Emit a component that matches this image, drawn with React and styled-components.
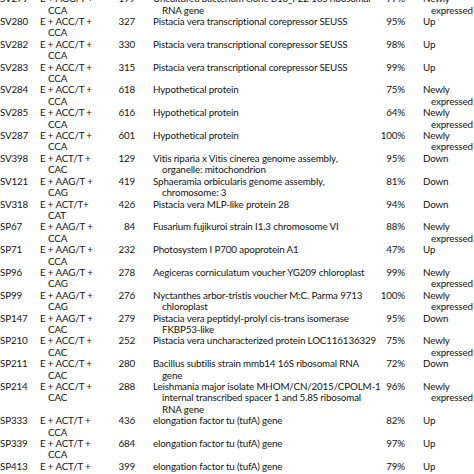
import React from 'react'
import styled, { createGlobalStyle } from 'styled-components'

const GlobalStyle = createGlobalStyle`
  html, body {
    margin: 0;
    padding: 0;
    background: #ffffff;
  }
  body {
    font-family: Lato, "Liberation Sans", Arial, sans-serif;
    color: #151515;
    overflow: hidden;
  }
`

const rows = [
  { id: 'SV279', primer: ['E + AGG/T +', 'CCA'], len: '199', desc: ['Uncultured bacterium clone B18_F22 16S ribosomal', 'RNA gene'], pct: '77%', reg: ['Newly', 'expressed'] },
  { id: 'SV280', primer: ['E + ACC/T +', 'CCA'], len: '327', desc: ['Pistacia vera transcriptional corepressor SEUSS'], pct: '95%', reg: ['Up'] },
  { id: 'SV282', primer: ['E + ACC/T +', 'CCA'], len: '330', desc: ['Pistacia vera transcriptional corepressor SEUSS'], pct: '98%', reg: ['Up'] },
  { id: 'SV283', primer: ['E + ACC/T +', 'CCA'], len: '315', desc: ['Pistacia vera transcriptional corepressor SEUSS'], pct: '99%', reg: ['Up'] },
  { id: 'SV284', primer: ['E + ACC/T +', 'CCA'], len: '618', desc: ['Hypothetical protein'], pct: '75%', reg: ['Newly', 'expressed'] },
  { id: 'SV285', primer: ['E + ACC/T +', 'CCA'], len: '616', desc: ['Hypothetical protein'], pct: '64%', reg: ['Newly', 'expressed'] },
  { id: 'SV287', primer: ['E + ACC/T +', 'CCA'], len: '601', desc: ['Hypothetical protein'], pct: '100%', reg: ['Newly', 'expressed'] },
  { id: 'SV398', primer: ['E + ACT/T +', 'CAC'], len: '129', desc: ['Vitis riparia x Vitis cinerea genome assembly,', 'organelle: mitochondrion'], pct: '95%', reg: ['Down'] },
  { id: 'SV121', primer: ['E + AAG/T +', 'CAG'], len: '419', desc: ['Sphaeramia orbicularis genome assembly,', 'chromosome: 3'], pct: '81%', reg: ['Down'] },
  { id: 'SV318', primer: ['E + ACT/T+', 'CAT'], len: '426', desc: ['Pistacia vera MLP-like protein 28'], pct: '94%', reg: ['Down'] },
  { id: 'SP67', primer: ['E + AAG/T +', 'CCA'], len: '84', desc: ['Fusarium fujikuroi strain I1.3 chromosome VI'], pct: '88%', reg: ['Newly', 'expressed'] },
  { id: 'SP71', primer: ['E + AAG/T +', 'CCA'], len: '232', desc: ['Photosystem I P700 apoprotein A1'], pct: '47%', reg: ['Up'] },
  { id: 'SP96', primer: ['E + AAG/T +', 'CAG'], len: '278', desc: ['Aegiceras corniculatum voucher YG209 chloroplast'], pct: '99%', reg: ['Newly', 'expressed'] },
  { id: 'SP99', primer: ['E + AAG/T +', 'CAG'], len: '276', desc: ['Nyctanthes arbor-tristis voucher M:C. Parma 9713', 'chloroplast'], pct: '100%', reg: ['Newly', 'expressed'] },
  { id: 'SP147', primer: ['E + AAG/T +', 'CAC'], len: '279', desc: ['Pistacia vera peptidyl-prolyl cis-trans isomerase', 'FKBP53-like'], pct: '95%', reg: ['Down'] },
  { id: 'SP210', primer: ['E + ACC/T +', 'CAC'], len: '252', desc: ['Pistacia vera uncharacterized protein LOC116136329'], pct: '75%', reg: ['Newly', 'expressed'] },
  { id: 'SP211', primer: ['E + ACC/T +', 'CAC'], len: '280', desc: ['Bacillus subtilis strain mmb14 16S ribosomal RNA', 'gene'], pct: '72%', reg: ['Down'] },
  { id: 'SP214', primer: ['E + ACC/T +', 'CAC'], len: '288', desc: ['Leishmania major isolate MHOM/CN/2015/CPOLM-1', 'internal transcribed spacer 1 and 5.8S ribosomal', 'RNA gene'], pct: '96%', reg: ['Newly', 'expressed'] },
  { id: 'SP333', primer: ['E + ACT/T +', 'CCA'], len: '436', desc: ['elongation factor tu (tufA) gene'], pct: '82%', reg: ['Up'] },
  { id: 'SP339', primer: ['E + ACT/T +', 'CCA'], len: '684', desc: ['elongation factor tu (tufA) gene'], pct: '97%', reg: ['Up'] },
  { id: 'SP413', primer: ['E + ACT/T +', 'CCA'], len: '399', desc: ['elongation factor tu (tufA) gene'], pct: '79%', reg: ['Up'] },
]

const Table = styled.div`
  width: 474px;
  margin-top: -6.8px;
  font-size: 9.8px;
  line-height: 11.4px;
  letter-spacing: -0.15px;
`

const Row = styled.div`
  display: grid;
  grid-template-columns: 40px 72px 23px 240px 30px 1fr;
`

const Cell = styled.div`
  white-space: nowrap;
  text-align: ${p => (p.$right ? 'right' : 'left')};
  padding-left: ${p => (p.$pad || 0) + (p.$hang || 0)}px;
  text-indent: ${p => -(p.$hang || 0)}px;
`

function Lines({ items }) {
  return items.map((t, i) => (
    <React.Fragment key={i}>
      {i > 0 && <br />}
      {t}
    </React.Fragment>
  ))
}

export default function App() {
  return (
    <>
      <GlobalStyle />
      <Table>
        {rows.map(r => (
          <Row key={r.id}>
            <Cell>{r.id}</Cell>
            <Cell $hang={8}><Lines items={r.primer} /></Cell>
            <Cell $right>{r.len}</Cell>
            <Cell $pad={18} $hang={9}><Lines items={r.desc} /></Cell>
            <Cell $right>{r.pct}</Cell>
            <Cell $pad={18} $hang={8}><Lines items={r.reg} /></Cell>
          </Row>
        ))}
      </Table>
    </>
  )
}
